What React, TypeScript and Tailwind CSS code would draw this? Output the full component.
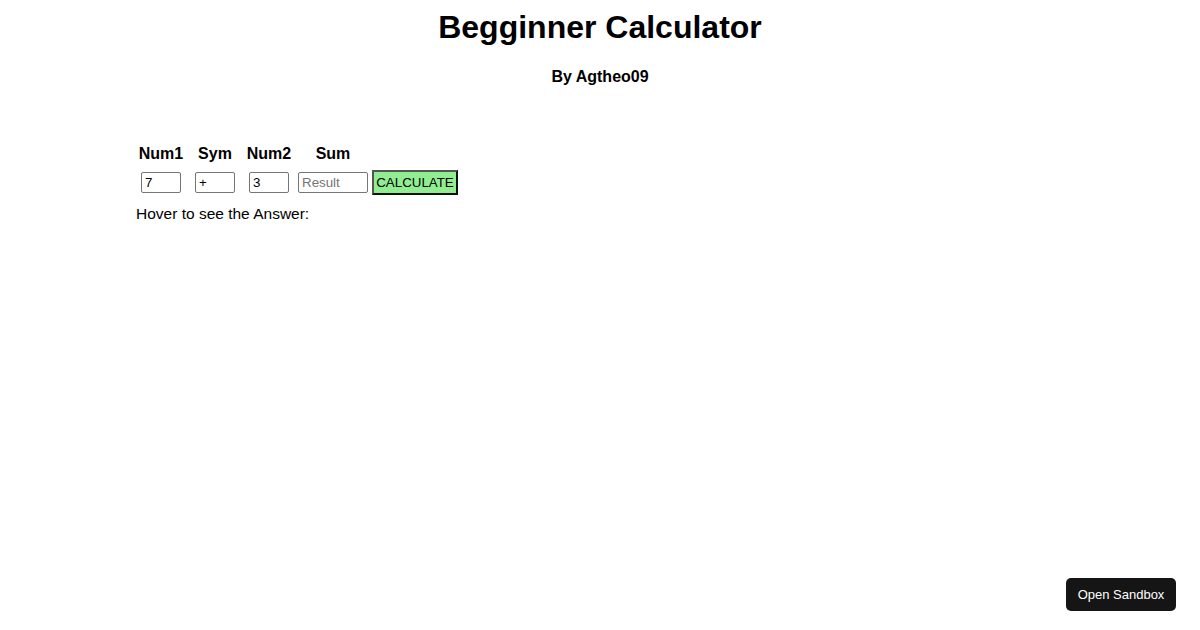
import * as React from "react";

// column boxes shared by the header row and the input row
const cols = [
  { label: "Num1", w: "w-[50px]", input: "w-[40px]", value: "7" },
  { label: "Sym", w: "w-[58px]", input: "w-[40px]", value: "+" },
  { label: "Num2", w: "w-[50px]", input: "w-[40px]", value: "3" },
  { label: "Sum", w: "w-[78px]", input: "w-[70px]", value: "" },
];

export default function App() {
  return (
    <div className="relative w-[1200px] h-[630px] overflow-hidden bg-white text-black font-['Liberation_Sans',Arial,sans-serif]">
      <h1 className="pt-[9px] text-center text-[32px] leading-[37px] font-bold">
        Begginner Calculator
      </h1>
      <h4 className="mt-[22px] text-center text-base leading-[18px] font-bold">
        By Agtheo09
      </h4>

      <div className="mt-[59px] pl-[136px]">
        <div className="flex">
          {cols.map((c) => (
            <div
              key={c.label}
              className={`${c.w} flex justify-center text-base leading-[18px] font-bold`}
            >
              {c.label}
            </div>
          ))}
        </div>

        <div className="mt-[7px] flex items-center h-[25px]">
          {cols.map((c) => (
            <div key={c.label} className={`${c.w} flex justify-center`}>
              <input
                readOnly
                defaultValue={c.value}
                placeholder={c.value ? undefined : "Result"}
                className={`${c.input} h-[21px] px-[3px] border border-[#767676] rounded-[2px] text-[13.33px] leading-[15px] text-black placeholder:text-[#757575] outline-none font-['Liberation_Sans',Arial,sans-serif]`}
              />
            </div>
          ))}
          <button className="w-[86px] h-[25px] bg-[#90ee90] border-2 border-solid border-t-[#555] border-l-[#555] border-r-[#111] border-b-[#111] text-[13.33px] leading-[15px] text-black font-['Liberation_Sans',Arial,sans-serif]">
            CALCULATE
          </button>
        </div>

        <p className="mt-[10px] text-[15.5px] leading-[18px]">Hover to see the Answer:</p>
      </div>

      <button className="absolute right-[24px] bottom-[19px] w-[110px] h-[33px] rounded-[5px] bg-[#151515] text-white text-[13px] font-['Liberation_Sans',Arial,sans-serif]">
        Open Sandbox
      </button>
    </div>
  );
}
